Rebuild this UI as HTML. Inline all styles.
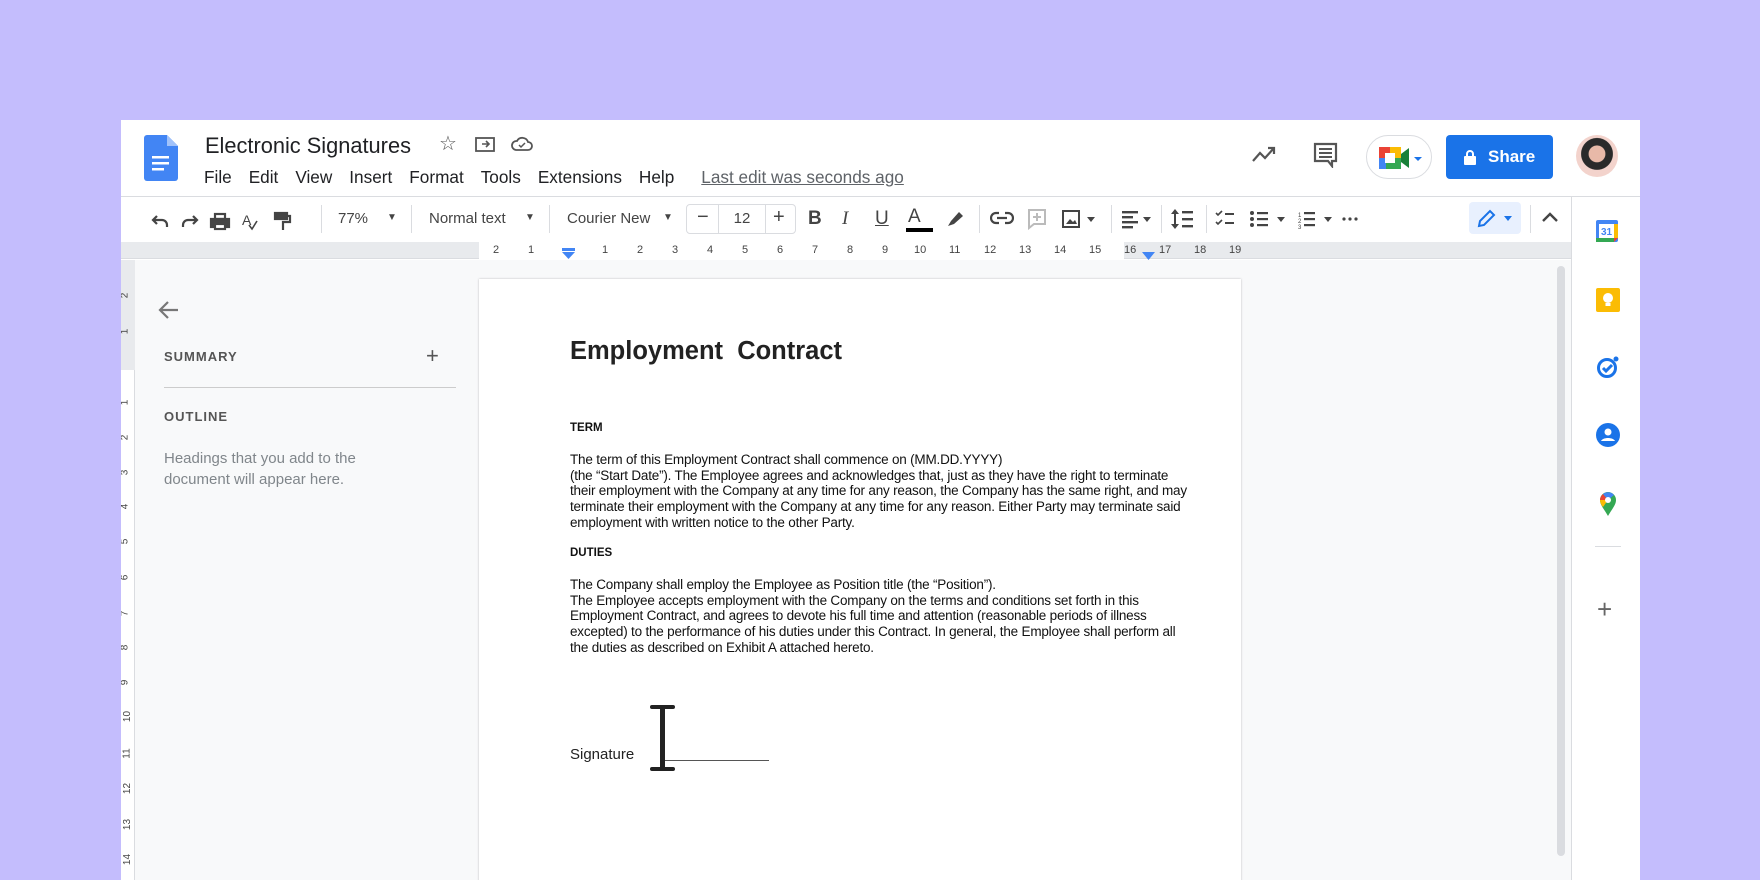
<!DOCTYPE html>
<html><head><meta charset="utf-8"><style>
*{margin:0;padding:0;box-sizing:border-box}
body{width:1760px;height:880px;background:#c4bdfd;font-family:"Liberation Sans",Arial,sans-serif;position:relative;overflow:hidden}
.abs{position:absolute}
#win{left:121px;top:120px;width:1519px;height:760px;background:#fff;overflow:hidden}
.menu span{margin-right:17px}
.tb{color:#444;font-size:15px}
.ruler{font-size:11px;color:#444}
.vr span{position:absolute;left:1px;font-size:10px;color:#444;transform:rotate(-90deg)}
.body{font-size:13.5px;line-height:15.7px;color:#111;letter-spacing:-0.2px}
</style></head><body>
<div id="win" class="abs">
 <svg class="abs" style="left:23px;top:15px" width="34" height="46" viewBox="0 0 34 46"><path d="M3 0h20l11 11v32a3 3 0 0 1-3 3H3a3 3 0 0 1-3-3V3a3 3 0 0 1 3-3z" fill="#4285f4"/><path d="M23 0v11h11z" fill="#a1c2fa"/><rect x="8" y="21" width="17" height="2.5" fill="#fff"/><rect x="8" y="27" width="17" height="2.5" fill="#fff"/><rect x="8" y="33" width="12" height="2.5" fill="#fff"/></svg>
 <div class="abs" style="left:84px;top:13px;font-size:21.8px;color:#202124">Electronic Signatures</div>
 <div class="abs" style="left:318px;top:11px;font-size:20px;color:#555">☆</div>
 <svg class="abs" style="left:354px;top:16px" width="20" height="16"><rect x="1" y="2" width="18" height="13" fill="none" stroke="#555" stroke-width="1.8"/><path d="M7 8h7M11 5l3 3-3 3" stroke="#555" stroke-width="1.6" fill="none"/></svg>
 <svg class="abs" style="left:390px;top:16px" width="22" height="16"><path d="M5 14h12a4 4 0 0 0 0-8 6 6 0 0 0-11-1 4.5 4.5 0 0 0-1 9z" fill="none" stroke="#555" stroke-width="1.8"/><path d="M8 9l2 2 4-4" stroke="#555" stroke-width="1.5" fill="none"/></svg>
 <div class="abs menu" style="left:83px;top:47px;font-size:17.2px;color:#202124;white-space:nowrap"><span>File</span><span>Edit</span><span>View</span><span>Insert</span><span>Format</span><span>Tools</span><span>Extensions</span><span>Help</span><span style="color:#5f6368;text-decoration:underline;margin-left:10px">Last edit was seconds ago</span></div>
 <svg class="abs" style="left:1130px;top:24px" width="26" height="20"><path d="M2 17l7-8 5 5 9-10M17 4h6v6" stroke="#555" stroke-width="2.2" fill="none"/></svg>
 <svg class="abs" style="left:1192px;top:22px" width="26" height="26"><path d="M2 2h21v17h-4v5l-4-5H2z" fill="none" stroke="#555" stroke-width="2.2"/><path d="M6 7h13M6 11h13M6 15h13" stroke="#555" stroke-width="2"/></svg>
 <div class="abs" style="left:1245px;top:15px;width:66px;height:44px;border:1px solid #dadce0;border-radius:22px"></div>
 <svg class="abs" style="left:1258px;top:25px" width="48" height="26"><rect x="0" y="2" width="22" height="22" fill="#34a853"/><rect x="0" y="2" width="11" height="11" fill="#ea4335"/><rect x="11" y="2" width="11" height="11" fill="#fbbc04"/><rect x="0" y="13" width="7" height="11" fill="#4285f4"/><rect x="6" y="8" width="10" height="10" fill="#fff"/><path d="M22 9l8-6v20l-8-6z" fill="#188038"/><path d="M35 12h8l-4 4z" fill="#1a73e8"/></svg>
 <div class="abs" style="left:1325px;top:15px;width:107px;height:44px;background:#1a73e8;border-radius:4px;color:#fff;font-size:17px;font-weight:bold;line-height:44px;padding-left:42px">Share</div>
 <svg class="abs" style="left:1342px;top:29px" width="14" height="16"><rect x="1" y="7" width="12" height="9" rx="1" fill="#fff"/><path d="M4 7V5a3 3 0 0 1 6 0v2" stroke="#fff" stroke-width="2" fill="none"/></svg>
 <div class="abs" style="left:1455px;top:15px;width:42px;height:42px;border-radius:50%;background:radial-gradient(circle at 50% 45%,#e8b9a8 0 26%,#2a2a2a 28% 50%,#f3d3cc 52%);"></div>
 <div class="abs" style="left:0;top:76px;width:1519px;height:1px;background:#dadce0"></div>
 <div class="abs tb" style="left:0;top:77px;width:1450px;height:45px">
  <svg class="abs" style="left:28px;top:14px" width="150" height="20" fill="none" stroke="#444" stroke-width="2.2">
   <path d="M4 9h9a5 5 0 0 1 5 5v2M8 5L4 9l4 4"/><path d="M48 9h-9a5 5 0 0 0-5 5v2M44 5l4 4-4 4"/>
   <rect x="62" y="8" width="18" height="8" fill="#444"/><rect x="66" y="3" width="10" height="5"/><rect x="66" y="13" width="10" height="5" fill="#fff"/>
   <text x="93" y="14" font-size="14" fill="#444" stroke="none" font-family="Liberation Sans">A</text><path d="M100 14l3 4 5-8" stroke-width="1.6"/>
   <rect x="126" y="2" width="12" height="6" fill="#444"/><path d="M138 5h3v6h-7v8"/>
  </svg>
  <div class="abs" style="left:200px;top:8px;width:1px;height:28px;background:#dadce0"></div>
  <div class="abs" style="left:217px;top:13px">77%</div><div class="abs" style="left:266px;top:15px;font-size:10px">▼</div>
  <div class="abs" style="left:290px;top:8px;width:1px;height:28px;background:#dadce0"></div>
  <div class="abs" style="left:308px;top:13px">Normal text</div><div class="abs" style="left:404px;top:15px;font-size:10px">▼</div>
  <div class="abs" style="left:428px;top:8px;width:1px;height:28px;background:#dadce0"></div>
  <div class="abs" style="left:446px;top:13px">Courier New</div><div class="abs" style="left:542px;top:15px;font-size:10px">▼</div>
  <div class="abs" style="left:565px;top:7px;width:110px;height:30px;border:1px solid #dadce0;border-radius:4px"></div>
  <div class="abs" style="left:576px;top:9px;font-size:20px">−</div>
  <div class="abs" style="left:597px;top:7px;width:48px;height:30px;border-left:1px solid #dadce0;border-right:1px solid #dadce0;text-align:center;line-height:29px">12</div>
  <div class="abs" style="left:652px;top:9px;font-size:20px">+</div>
  <div class="abs" style="left:687px;top:11px;font-size:19px;font-weight:bold">B</div>
  <div class="abs" style="left:721px;top:11px;font-size:19px;font-style:italic;font-family:'Liberation Serif',serif">I</div>
  <div class="abs" style="left:754px;top:11px;font-size:19px;text-decoration:underline">U</div>
  <div class="abs" style="left:787px;top:9px;font-size:19px">A</div><div class="abs" style="left:785px;top:31px;width:27px;height:4px;background:#000"></div>
  <svg class="abs" style="left:824px;top:12px" width="20" height="20"><path d="M3 17l3-5 8-9 4 4-9 8z" fill="#444"/></svg>
  <div class="abs" style="left:858px;top:8px;width:1px;height:28px;background:#dadce0"></div>
  <svg class="abs" style="left:869px;top:14px" width="24" height="14" fill="none" stroke="#444" stroke-width="2.2"><path d="M9 2H6a5 5 0 0 0 0 10h3M15 2h3a5 5 0 0 1 0 10h-3M7 7h10"/></svg>
  <svg class="abs" style="left:906px;top:11px" width="20" height="22" fill="none" stroke="#bbb" stroke-width="2"><path d="M2 2h16v14H7l-5 4z"/><path d="M10 5v8M6 9h8"/></svg>
  <svg class="abs" style="left:940px;top:12px" width="40" height="20"><rect x="2" y="2" width="16" height="16" fill="none" stroke="#444" stroke-width="2"/><path d="M5 15l4-5 3 3 2-2 2 4z" fill="#444"/><path d="M26 8h8l-4 5z" fill="#444"/></svg>
  <div class="abs" style="left:990px;top:8px;width:1px;height:28px;background:#dadce0"></div>
  <svg class="abs" style="left:999px;top:13px" width="36" height="20" fill="#444"><rect x="2" y="1" width="16" height="2.4"/><rect x="2" y="6" width="11" height="2.4"/><rect x="2" y="11" width="16" height="2.4"/><rect x="2" y="16" width="11" height="2.4"/><path d="M23 7h8l-4 5z"/></svg>
  <div class="abs" style="left:1040px;top:8px;width:1px;height:28px;background:#dadce0"></div>
  <svg class="abs" style="left:1049px;top:10px" width="24" height="24" fill="#444"><path d="M5 2l-4 5h3v10H1l4 5 4-5H6V7h3z"/><rect x="12" y="4" width="11" height="2.4"/><rect x="12" y="11" width="11" height="2.4"/><rect x="12" y="18" width="11" height="2.4"/></svg>
  <div class="abs" style="left:1085px;top:8px;width:1px;height:28px;background:#dadce0"></div>
  <svg class="abs" style="left:1093px;top:12px" width="170" height="22" fill="#444"><path d="M2 4l2 2 4-4M2 13l2 2 4-4" stroke="#444" stroke-width="1.6" fill="none"/><rect x="11" y="4" width="9" height="2"/><rect x="11" y="13" width="9" height="2"/>
   <circle cx="38" cy="4" r="2"/><circle cx="38" cy="10" r="2"/><circle cx="38" cy="16" r="2"/><rect x="43" y="3" width="11" height="2.2"/><rect x="43" y="9" width="11" height="2.2"/><rect x="43" y="15" width="11" height="2.2"/><path d="M63 8h8l-4 5z"/>
   <text x="84" y="8" font-size="6">1</text><text x="84" y="14" font-size="6">2</text><text x="84" y="20" font-size="6">3</text><rect x="90" y="3" width="11" height="2.2"/><rect x="90" y="9" width="11" height="2.2"/><rect x="90" y="15" width="11" height="2.2"/><path d="M110 8h8l-4 5z"/>
   <circle cx="130" cy="10" r="1.6"/><circle cx="136" cy="10" r="1.6"/><circle cx="142" cy="10" r="1.6"/></svg>
  <div class="abs" style="left:1348px;top:5px;width:52px;height:32px;background:#e8f0fe;border-radius:4px"></div>
  <svg class="abs" style="left:1355px;top:10px" width="40" height="22"><path d="M3 19l1-5 10-10 4 4-10 10z" fill="none" stroke="#1a73e8" stroke-width="2"/><path d="M28 9h8l-4 5z" fill="#1a73e8"/></svg>
  <div class="abs" style="left:1409px;top:8px;width:1px;height:28px;background:#dadce0"></div>
  <svg class="abs" style="left:1420px;top:14px" width="18" height="12"><path d="M2 10l7-7 7 7" stroke="#444" stroke-width="2.4" fill="none"/></svg>
 </div>
 <div class="abs" style="left:1450px;top:77px;width:1px;height:683px;background:#dadce0"></div>
 <div class="abs" style="left:1451px;top:77px;width:68px;height:683px;background:#fff"></div>
 <svg class="abs" style="left:1474px;top:99px" width="24" height="24"><rect x="1" y="1" width="22" height="22" rx="2" fill="#4285f4"/><rect x="4" y="5" width="16" height="14" fill="#fff"/><rect x="1" y="19" width="18" height="4" fill="#34a853"/><rect x="19" y="5" width="4" height="14" fill="#fbbc04"/><path d="M19 19h4l-4 4z" fill="#ea4335"/><text x="6" y="16" font-size="10" font-weight="bold" fill="#4285f4" font-family="Liberation Sans">31</text></svg>
 <svg class="abs" style="left:1475px;top:168px" width="24" height="24"><rect x="0" y="0" width="24" height="24" rx="2" fill="#fbbc04"/><circle cx="12" cy="10" r="5" fill="#fff"/><rect x="9.5" y="15" width="5" height="3" fill="#fff"/></svg>
 <svg class="abs" style="left:1475px;top:235px" width="24" height="24"><circle cx="11" cy="13" r="8.5" fill="none" stroke="#1a73e8" stroke-width="3"/><path d="M7 13l3 3 6-6" stroke="#1a73e8" stroke-width="3" fill="none"/><circle cx="20" cy="4" r="2.5" fill="#1a73e8"/></svg>
 <svg class="abs" style="left:1475px;top:303px" width="24" height="24"><circle cx="12" cy="12" r="12" fill="#1a73e8"/><circle cx="12" cy="9" r="3.5" fill="#fff"/><path d="M5 18c2-4 12-4 14 0z" fill="#fff"/></svg>
 <svg class="abs" style="left:1477px;top:370px" width="20" height="28"><path d="M10 26C6 19 2 15 2 10a8 8 0 0 1 16 0c0 5-4 9-8 16z" fill="#34a853"/><path d="M2 10a8 8 0 0 1 3-6l5 6z" fill="#ea4335"/><path d="M5 4a8 8 0 0 1 11 1l-6 5z" fill="#4285f4"/><path d="M2 10l8 0-5 7C3 15 2 12 2 10z" fill="#fbbc04"/><circle cx="10" cy="10" r="3" fill="#fff"/></svg>
 <div class="abs" style="left:1474px;top:426px;width:26px;height:1px;background:#dadce0"></div>
 <div class="abs" style="left:1476px;top:474px;font-size:26px;color:#666;font-weight:300">+</div>
 <div class="abs" style="left:0;top:122px;width:1450px;height:17px;background:#e8eaed;border-bottom:1px solid #dadce0"></div>
 <div class="abs" style="left:358px;top:122px;width:645px;height:17px;background:#fff"></div>
 <div class="abs ruler" style="left:0;top:124px;width:1450px;height:14px;white-space:nowrap">
  <span class="abs" style="left:372px">2</span><span class="abs" style="left:407px">1</span>
  <span class="abs" style="left:481px">1</span><span class="abs" style="left:516px">2</span><span class="abs" style="left:551px">3</span><span class="abs" style="left:586px">4</span><span class="abs" style="left:621px">5</span><span class="abs" style="left:656px">6</span><span class="abs" style="left:691px">7</span><span class="abs" style="left:726px">8</span><span class="abs" style="left:761px">9</span><span class="abs" style="left:793px">10</span><span class="abs" style="left:828px">11</span><span class="abs" style="left:863px">12</span><span class="abs" style="left:898px">13</span><span class="abs" style="left:933px">14</span><span class="abs" style="left:968px">15</span><span class="abs" style="left:1003px">16</span><span class="abs" style="left:1038px">17</span><span class="abs" style="left:1073px">18</span><span class="abs" style="left:1108px">19</span>
 </div>
 <svg class="abs" style="left:440px;top:128px" width="16" height="12"><rect x="1" y="0" width="13" height="3" fill="#4285f4"/><path d="M1 4h13l-6.5 7z" fill="#4285f4"/></svg>
 <svg class="abs" style="left:1021px;top:132px" width="14" height="9"><path d="M0 0h13l-6.5 8z" fill="#4285f4"/></svg>
 <div class="abs" style="left:0;top:140px;width:1450px;height:620px;background:#f8f9fa"></div>
 <div class="abs" style="left:0;top:140px;width:14px;height:620px;background:#fff;border-right:1px solid #dadce0"></div>
 <div class="abs" style="left:0;top:140px;width:14px;height:110px;background:#e8eaed"></div>
 <div class="abs vr" style="left:0;top:0;width:14px;height:760px">
  <span style="top:170px">2</span><span style="top:206px">1</span><span style="top:277px">1</span><span style="top:312px">2</span><span style="top:347px">3</span><span style="top:381px">4</span><span style="top:416px">5</span><span style="top:452px">6</span><span style="top:488px">7</span><span style="top:522px">8</span><span style="top:557px">9</span><span style="top:591px">10</span><span style="top:628px">11</span><span style="top:663px">12</span><span style="top:699px">13</span><span style="top:734px">14</span>
 </div>
 <svg class="abs" style="left:37px;top:180px" width="22" height="20"><path d="M20 10H3M10 2L2 10l8 8" stroke="#777" stroke-width="2.2" fill="none"/></svg>
 <div class="abs" style="left:43px;top:229px;font-size:13px;letter-spacing:1px;color:#555;font-weight:bold">SUMMARY</div>
 <div class="abs" style="left:305px;top:223px;font-size:22px;color:#555">+</div>
 <div class="abs" style="left:43px;top:267px;width:292px;height:1px;background:#ccc"></div>
 <div class="abs" style="left:43px;top:289px;font-size:13px;letter-spacing:1px;color:#555;font-weight:bold">OUTLINE</div>
 <div class="abs" style="left:43px;top:328px;font-size:15px;line-height:21px;color:#80868b">Headings that you add to the<br>document will appear here.</div>
 <div class="abs" style="left:358px;top:159px;width:762px;height:620px;background:#fff;box-shadow:0 0 2px rgba(0,0,0,.25)"></div>
 <div class="abs" style="left:449px;top:217px;font-size:25.5px;font-weight:bold;color:#222;white-space:pre">Employment  Contract</div>
 <div class="abs" style="left:449px;top:302px;font-size:11.5px;font-weight:bold;color:#111">TERM</div>
 <div class="abs body" style="left:449px;top:332px;width:660px">The term of this Employment Contract shall commence on (MM.DD.YYYY)<br>(the “Start Date”). The Employee agrees and acknowledges that, just as they have the right to terminate<br>their employment with the Company at any time for any reason, the Company has the same right, and may<br>terminate their employment with the Company at any time for any reason. Either Party may terminate said<br>employment with written notice to the other Party.</div>
 <div class="abs" style="left:449px;top:427px;font-size:11.5px;font-weight:bold;color:#111">DUTIES</div>
 <div class="abs body" style="left:449px;top:457px;width:660px">The Company shall employ the Employee as Position title (the “Position”).<br>The Employee accepts employment with the Company on the terms and conditions set forth in this<br>Employment Contract, and agrees to devote his full time and attention (reasonable periods of illness<br>excepted) to the performance of his duties under this Contract. In general, the Employee shall perform all<br>the duties as described on Exhibit A attached hereto.</div>
 <div class="abs" style="left:449px;top:626px;font-size:15px;color:#222">Signature</div>
 <div class="abs" style="left:544px;top:640px;width:104px;height:1px;background:#555"></div>
 <div class="abs" style="left:539px;top:585px;width:5px;height:65px;background:#222"></div>
 <div class="abs" style="left:529px;top:585px;width:25px;height:4px;background:#222;border-radius:2px"></div>
 <div class="abs" style="left:529px;top:647px;width:25px;height:4px;background:#222;border-radius:2px"></div>
 <div class="abs" style="left:1436px;top:146px;width:8px;height:590px;background:#dadce0;border-radius:4px"></div>
</div>
</body></html>
